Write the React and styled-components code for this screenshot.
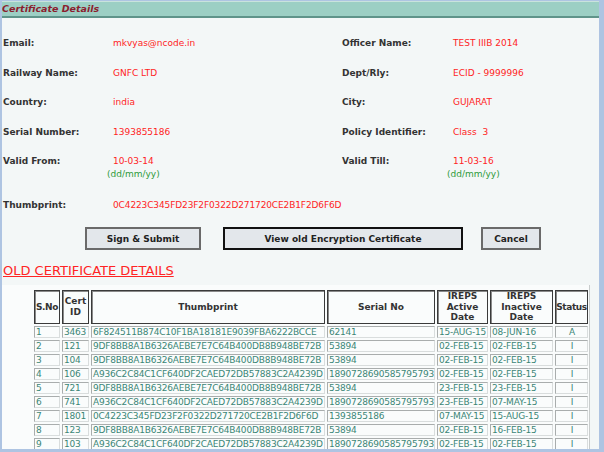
import styled, { createGlobalStyle } from 'styled-components';

const GlobalStyle = createGlobalStyle`
  html, body {
    margin: 0;
    padding: 0;
    background: #aec4e2;
  }
  body {
    font-family: 'DejaVu Sans', Verdana, sans-serif;
    font-size: 9px;
  }
`;

const Frame = styled.div`
  width: 597px;
  height: 448px;
  border-top: 1px solid #aec4e2;
  border-left: 2px solid #aec4e2;
  background: #f3f7f7;
  overflow: hidden;
`;

const TitleBar = styled.div`
  height: 14px;
  background: #9ccfc4;
  border-bottom: 2px solid #5f948a;
  border-top: 1px solid #c9e3dd;
  font-weight: bold;
  font-style: italic;
  font-size: 9.5px;
  line-height: 14px;
  color: #8b1e2e;
  white-space: nowrap;
`;

const DetailsGrid = styled.div`
  display: grid;
  grid-template-columns: 110px 229px 111px 1fr;
  grid-template-rows: 29.5px 29.5px 29.5px 29.5px 44px 30px;
  padding: 12px 0 0 1px;
`;

const Label = styled.div`
  font-weight: bold;
  color: #333;
  line-height: 12px;
  padding-top: 7px;
  white-space: nowrap;
`;

const Value = styled.div`
  color: #ff2424;
  line-height: 12px;
  padding-top: 7px;
  white-space: nowrap;
`;

const DateBlock = styled.div`
  display: inline-flex;
  flex-direction: column;
  align-items: center;
  margin-left: -6px;
`;

const DateHint = styled.span`
  color: #2e9a3a;
  line-height: 14px;
`;

const WideValue = styled(Value)`
  grid-column: 2 / 5;
  letter-spacing: -0.12px;
`;

const ButtonRow = styled.div`
  display: flex;
  padding: 5px 0 0 83px;
`;

const Button = styled.button`
  width: ${(p) => p.$w}px;
  height: 23px;
  margin-right: ${(p) => p.$gap || 0}px;
  background: #e3e7eb;
  border: 2px solid ${(p) => (p.$active ? '#111' : '#6a6a6a')};
  font-family: 'DejaVu Sans', Verdana, sans-serif;
  font-size: 9px;
  font-weight: bold;
  color: #222;
  padding: 0;
`;

const SectionTitle = styled.div`
  margin: 13px 0 0 1px;
  font-size: 13px;
  line-height: 16px;
  color: #ff2424;
  text-decoration: underline;
  white-space: nowrap;
`;

const TableBox = styled.div`
  margin-top: 6px;
  width: 588px;
  height: 200px;
  background: #fafcfc;
  border-right: 1px solid #c8cccc;
  padding: 3px 0 0 30px;
  box-sizing: border-box;
`;

const Table = styled.table`
  table-layout: fixed;
  width: ${(p) => p.$w}px;
  border-collapse: separate;
  border-spacing: 2px;
  font-size: 9px;
`;

const Th = styled.th`
  border: 1px solid #3a3a3a;
  box-shadow: inset 1px 1px 0 #8a8a8a;
  color: #333;
  font-weight: bold;
  line-height: 10.5px;
  height: 31px;
  padding: 0;
  letter-spacing: ${(p) => (p.$nowrap ? '-0.4px' : '0')};
  text-align: center;
  vertical-align: middle;
  overflow: hidden;
  white-space: ${(p) => (p.$nowrap ? 'nowrap' : 'normal')};
`;

const Td = styled.td`
  border: 1px solid;
  border-color: #a9adad #d9dddd #d9dddd #a9adad;
  color: #3b8676;
  height: 10px;
  line-height: 10px;
  padding: 0 0 0 1px;
  letter-spacing: -0.2px;
  text-align: ${(p) => (p.$center ? 'center' : 'left')};
  white-space: nowrap;
  overflow: hidden;
`;

const columns = [
  { title: 'S.No', width: 26 },
  { title: 'Cert ID', width: 27 },
  { title: 'Thumbprint', width: 234 },
  { title: 'Serial No', width: 108 },
  { title: 'IREPS Active Date', width: 51 },
  { title: 'IREPS Inactive Date', width: 63 },
  { title: 'Status', width: 33 },
];

const tableWidth = columns.reduce((sum, c) => sum + c.width, 0) + 2 * (columns.length + 1);

const TP_A = '9DF8BB8A1B6326AEBE7E7C64B400DB8B948BE72B';
const TP_B = 'A936C2C84C1CF640DF2CAED72DB57883C2A4239D';
const SN_B = '1890728690585795793';

const rows = [
  ['1', '3463', '6F824511B874C10F1BA18181E9039FBA6222BCCE', '62141', '15-AUG-15', '08-JUN-16', 'A'],
  ['2', '121', TP_A, '53894', '02-FEB-15', '02-FEB-15', 'I'],
  ['3', '104', TP_A, '53894', '02-FEB-15', '02-FEB-15', 'I'],
  ['4', '106', TP_B, SN_B, '02-FEB-15', '02-FEB-15', 'I'],
  ['5', '721', TP_A, '53894', '23-FEB-15', '23-FEB-15', 'I'],
  ['6', '741', TP_B, SN_B, '23-FEB-15', '07-MAY-15', 'I'],
  ['7', '1801', '0C4223C345FD23F2F0322D271720CE2B1F2D6F6D', '1393855186', '07-MAY-15', '15-AUG-15', 'I'],
  ['8', '123', TP_A, '53894', '02-FEB-15', '16-FEB-15', 'I'],
  ['9', '103', TP_B, SN_B, '02-FEB-15', '02-FEB-15', 'I'],
];

function DateValue({ date }) {
  return (
    <Value>
      <DateBlock>
        <span>{date}</span>
        <DateHint>(dd/mm/yy)</DateHint>
      </DateBlock>
    </Value>
  );
}

export default function App() {
  return (
    <>
      <GlobalStyle />
      <Frame>
        <TitleBar>Certificate Details</TitleBar>
        <DetailsGrid>
          <Label>Email:</Label>
          <Value>mkvyas@ncode.in</Value>
          <Label>Officer Name:</Label>
          <Value>TEST IIIB 2014</Value>

          <Label>Railway Name:</Label>
          <Value>GNFC LTD</Value>
          <Label>Dept/Rly:</Label>
          <Value>ECID - 9999996</Value>

          <Label>Country:</Label>
          <Value>india</Value>
          <Label>City:</Label>
          <Value>GUJARAT</Value>

          <Label>Serial Number:</Label>
          <Value>1393855186</Value>
          <Label>Policy Identifier:</Label>
          <Value>Class&nbsp; 3</Value>

          <Label>Valid From:</Label>
          <DateValue date="10-03-14" />
          <Label>Valid Till:</Label>
          <DateValue date="11-03-16" />

          <Label>Thumbprint:</Label>
          <WideValue>0C4223C345FD23F2F0322D271720CE2B1F2D6F6D</WideValue>
        </DetailsGrid>

        <ButtonRow>
          <Button $w={116} $gap={22}>Sign &amp; Submit</Button>
          <Button $w={240} $gap={18} $active>View old Encryption Certificate</Button>
          <Button $w={60}>Cancel</Button>
        </ButtonRow>

        <SectionTitle>OLD CERTIFICATE DETAILS</SectionTitle>

        <TableBox>
          <Table $w={tableWidth}>
            <colgroup>
              {columns.map((c) => (
                <col key={c.title} style={{ width: c.width }} />
              ))}
            </colgroup>
            <thead>
              <tr>
                {columns.map((c) => (
                  <Th key={c.title} $nowrap={c.title === 'S.No' || c.title === 'Status'}>
                    {c.title}
                  </Th>
                ))}
              </tr>
            </thead>
            <tbody>
              {rows.map((r) => (
                <tr key={r[0]}>
                  {r.map((cell, i) => (
                    <Td key={i} $center={i === 6}>
                      {cell}
                    </Td>
                  ))}
                </tr>
              ))}
            </tbody>
          </Table>
        </TableBox>
      </Frame>
    </>
  );
}
